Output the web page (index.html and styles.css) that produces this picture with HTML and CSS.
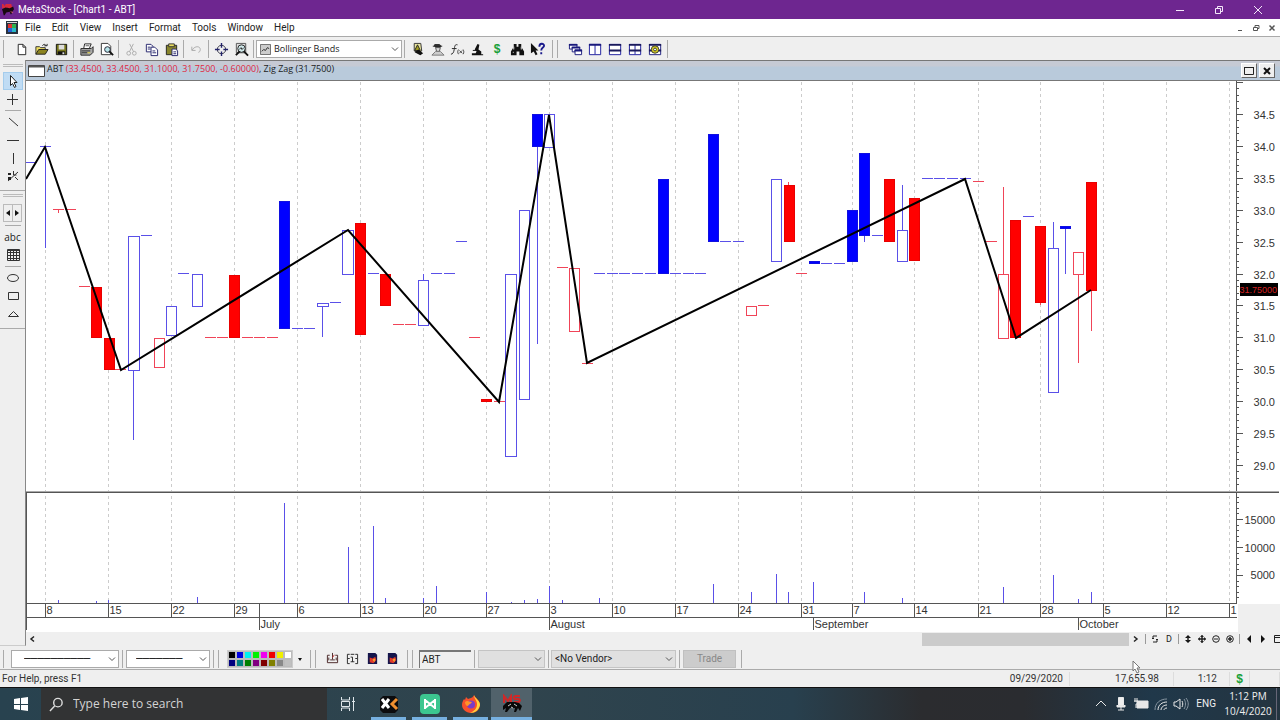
FILE: index.html
```html
<!DOCTYPE html>
<html lang="en">
<head>
<meta charset="utf-8">
<title>MetaStock - [Chart1 - ABT]</title>
<link rel="stylesheet" href="styles.css">
</head>
<body>
<div class="app">
  <header class="titlebar">
    <svg class="bull" viewBox="0 0 16 14"><path d="M2 5V1l2 3 2-3v4M12 1H8v2h4v2H8" fill="none" stroke="#d8283c" stroke-width="2"/><path d="M1 6l4-2 5 1 4-2 1 3-2 3-1 3h-1l-1-3-4 1-2 3H3l-1-4z" fill="#17090f"/><path d="M11 9l3 1" stroke="#d66"/></svg>
    <h1>MetaStock - [Chart1 - ABT]</h1>
    <div class="winbtns">
      <button aria-label="Minimize"><svg viewBox="0 0 10 10"><path d="M1 5.5h8"/></svg></button>
      <button aria-label="Restore"><svg viewBox="0 0 10 10"><path d="M1.500 3.500h5v5h-5zM3.500 3V1.500h5v5H7"/></svg></button>
      <button aria-label="Close"><svg viewBox="0 0 10 10"><path d="M1 1l8 8M9 1L1 9"/></svg></button>
    </div>
  </header>

  <nav class="menubar">
    <svg class="mdi" viewBox="0 0 12 13"><path fill="#2a3340" d="M0 0h12v13H0z"/><path fill="#d8d8d8" d="M1 1h10v1H1z"/><path fill="#e03030" d="M2 3h4v4H2z"/><path fill="#30b050" d="M6 3h4v4H6z"/><path fill="#2860d0" d="M2 7h4v4H2z"/><path fill="#28b8c8" d="M6 7h4v4H6z"/></svg>
    <button>File</button><button>Edit</button><button>View</button><button>Insert</button><button>Format</button><button>Tools</button><button>Window</button><button>Help</button>
    <div class="mdibtns">
      <button aria-label="Minimize chart"><svg viewBox="0 0 8 8"><path d="M2 6.500h4"/></svg></button>
      <button aria-label="Restore chart"><svg viewBox="0 0 8 8"><path d="M1.500 3.500h4v3h-4zM3 3V1.500h4v3H6"/></svg></button>
      <button aria-label="Close chart"><svg viewBox="0 0 8 8"><path d="M1.500 1.500l5 5M6.500 1.500l-5 5" stroke-width="1.500"/></svg></button>
    </div>
  </nav>

  <div class="toolbar">
    <button aria-label="New"><svg viewBox="0 0 16 16"><path d="M4.500 2.500h5l3 3v8h-8z" fill="#fff" stroke="#222"/><path d="M9.500 2.500v3h3" fill="none" stroke="#222"/></svg></button>
    <button aria-label="Open"><svg viewBox="0 0 16 16"><path d="M2 13V5h4l1 1h5v2" fill="#f0e060" stroke="#333"/><path d="M2 13l3-5h10l-3 5z" fill="#8c8420" stroke="#222"/><path d="M9 4c1-2 3-2 4 0m1-2v2h-3" fill="none" stroke="#222"/></svg></button>
    <button aria-label="Save"><svg viewBox="0 0 16 16"><path d="M2.500 2.500h11v11h-11z" fill="#77761c" stroke="#111"/><path d="M5 3h6v5H5z" fill="#ddd"/><path d="M4 10h8v3H4z" fill="#111"/><path d="M9 11h2v2H9z" fill="#ddd"/></svg></button>
    <i class="sep"></i>
    <button aria-label="Print"><svg viewBox="0 0 16 16"><path d="M5 7l1-5h7l-2 5z" fill="#fff" stroke="#222"/><path d="M2 7h11l2-2v6l-3 3H2z" fill="#aaa" stroke="#222"/><path d="M3 9.500h9M3 11.500h6" stroke="#222"/><path d="M9 11h3v1H9z" fill="#dc3"/><path d="M7 4h4" stroke="#555"/></svg></button>
    <button aria-label="Print preview"><svg viewBox="0 0 16 16"><path d="M2.500 1.500h7l3 3v9h-10z" fill="#fff" stroke="#333"/><circle cx="9" cy="8" r="3" fill="#b8e4e8" stroke="#223"/><path d="M11 10l4 4" stroke="#111" stroke-width="2"/></svg></button>
    <i class="sep"></i>
    <button aria-label="Cut"><svg viewBox="0 0 16 16"><g fill="none" stroke="#aaa"><path d="M6 2l4 8M10 2l-4 8"/><circle cx="5" cy="12" r="2"/><circle cx="11" cy="12" r="2"/></g></svg></button>
    <button aria-label="Copy"><svg viewBox="0 0 16 16"><g fill="#fff" stroke="#24246c"><path d="M2.500 2.500h5l2 2v6h-7z"/><path d="M7.500 5.500h4l3 3v6h-7z"/><path d="M4 5.500h3M4 7.500h3M9 9.500h3M9 11.500h4"/></g></svg></button>
    <button aria-label="Paste"><svg viewBox="0 0 16 16"><path d="M2.500 3.500h11v10h-11z" fill="#88852c" stroke="#222"/><path d="M5 2h6v3H5z" fill="#e8dc60" stroke="#333"/><path d="M8.500 7.500h4l2 2v5h-6z" fill="#fff" stroke="#24246c"/><path d="M10 10.500h3M10 12.500h3" stroke="#24246c"/></svg></button>
    <i class="sep"></i>
    <button aria-label="Undo"><svg viewBox="0 0 16 16"><path d="M3 5v4h4M3.500 8.500C6 4 12 4 12 8c0 2-1 3-2 3" fill="none" stroke="#aaa"/></svg></button>
    <i class="sep"></i>
    <button aria-label="Crosshair"><svg viewBox="0 0 16 16"><circle cx="8" cy="8" r="4.500" fill="none" stroke="#334"/><path d="M8 1v5M8 10v5M1 8h5M10 8h5" stroke="#22226c" stroke-width="1.500"/></svg></button>
    <button aria-label="Zoom box"><svg viewBox="0 0 16 16"><path d="M2.500 1.500h10v10h-10z" fill="#ddd" stroke="#555"/><circle cx="8" cy="7" r="4" fill="#cfe8ea" stroke="#222"/><path d="M5.500 8l2-2 1 2 2-2" stroke="#222" fill="none"/><path d="M10.500 10l4.500 4.500M6 10l-4 4" stroke="#111" stroke-width="2"/></svg></button>
    <i class="sep"></i>
    <div class="combo combo-ind">
      <svg class="lead" viewBox="0 0 12 12"><path d="M.5.5h11v11H.5z" fill="#ccc" stroke="#666"/><path d="M2 8l2-2 2 1 2-3 2 1" fill="none" stroke="#222"/></svg>
      <select aria-label="Indicator"><option>Bollinger Bands</option></select>
      <svg class="chev" viewBox="0 0 8 8"><path d="M1 2.500l3 3 3-3"/></svg>
    </div>
    <i class="sep"></i>
    <button aria-label="Expert advisor"><svg viewBox="0 0 16 16"><path d="M4.500 1.500h7l1 8-4 2-4-2z" fill="#e8e4a0" stroke="#333"/><path d="M8 3l3 6H5z" fill="#a4a020" stroke="#222"/><path d="M5 11l4-3 5 4-3 2z" fill="#111"/></svg></button>
    <button aria-label="System tester"><svg viewBox="0 0 16 16"><path d="M4 4l1-2h5l2 2-1 2H6z" fill="#333"/><path d="M3 4.500h10" stroke="#222"/><path d="M6 6h5l-1 4H7z" fill="#ddd" stroke="#555"/><path d="M2 14l4-4h5l4 4z" fill="#ccc" stroke="#777"/></svg></button>
    <button aria-label="Indicator builder"><svg viewBox="0 0 16 16"><path d="M8 3c-3-1-3 2-3.500 5S3 13 1 13M2 7h5" fill="none" stroke="#222"/><path d="M9 8c-1 2-1 3 0 5M14 8c1 2 1 3 0 5M10 9l3 3M13 9l-3 3" fill="none" stroke="#444"/></svg></button>
    <button aria-label="Explorer"><svg viewBox="0 0 16 16"><path d="M8 2l2 1-1 5 3 2v3h2v1H2v-2h4l1-2-2-2z" fill="#111"/><path d="M3 9h5" stroke="#111"/></svg></button>
    <button aria-label="OptionScope" class="dollar">$</button>
    <button aria-label="Find"><svg viewBox="0 0 16 16"><path d="M4 2h3v3h2V2h3v3l3 5v4h-5v-4H7v4H1v-4l3-5z" fill="#111"/><path d="M4 5v3M12 5v3M3 11h1" stroke="#eee"/></svg></button>
    <button aria-label="Context help"><svg viewBox="0 0 16 16"><path d="M1 1v11l3-2 2 4 2-1-2-4h3z" fill="#111"/><path d="M10 5c0-4 5-4 5-1 0 2-3 2-3 5M12 11v2" fill="none" stroke="#1a1a8c" stroke-width="2"/></svg></button>
    <i class="sep sep-wide"></i>
    <button aria-label="Cascade"><svg viewBox="0 0 16 16"><g fill="#fff" stroke="#1a1a7c"><path d="M1.500 2.500h8v5h-8z"/><path d="M4.500 5.500h8v5h-8z"/><path d="M7.500 8.500h7v5h-7z"/></g><path d="M1 3h9M4 6h9M7 9h8" stroke="#1a1a7c" stroke-width="2"/></svg></button>
    <button aria-label="Tile columns"><svg viewBox="0 0 16 16"><path d="M1.500 2.500h12v11h-12zM7.500 3v10" fill="#fff" stroke="#1a1a9c"/><path d="M1 3h13" stroke="#1a1a7c" stroke-width="2"/></svg></button>
    <button aria-label="Tile rows"><svg viewBox="0 0 16 16"><path d="M1.500 2.500h12v11h-12z" fill="#fff" stroke="#1a1a9c"/><path d="M1 3h13M1 9h13" stroke="#1a1a5c" stroke-width="2"/></svg></button>
    <button aria-label="Tile"><svg viewBox="0 0 16 16"><path d="M1.500 2.500h12v11h-12zM7.500 3v10" fill="#fff" stroke="#1a1a9c"/><path d="M1 3h13M1 9h13" stroke="#1a1a5c" stroke-width="2"/></svg></button>
    <button aria-label="Layout"><svg viewBox="0 0 16 16"><path d="M1.500 2.500h12v11h-12z" fill="#fff" stroke="#1a1a7c"/><path d="M1 3h13M1 9h13" stroke="#1a1a5c" stroke-width="2"/><circle cx="7.500" cy="8" r="4" fill="#d8d020" stroke="#333"/><circle cx="7.500" cy="8" r="1.500" fill="#fff" stroke="#333"/></svg></button>
    <i class="sep"></i>
  </div>

  <div class="work">
    <aside class="tools">
      <i class="grip"></i>
      <button class="on" aria-label="Select"><svg viewBox="0 0 16 16"><path d="M5.500 2.500v10l2-2 2 4 1.500-1-2-4h3z" fill="#fff" stroke="#222"/></svg></button>
      <button aria-label="Crosshair tool"><svg viewBox="0 0 16 16"><path d="M7.500 3v11M2 8.500h11"/></svg></button>
      <i class="rule"></i>
      <button aria-label="Trendline"><svg viewBox="0 0 16 16"><path d="M4 4l9 8"/></svg></button>
      <button aria-label="Horizontal line"><svg viewBox="0 0 16 16"><path d="M2 8.500h12"/></svg></button>
      <button aria-label="Vertical line"><svg viewBox="0 0 16 16"><path d="M8.500 3v11"/></svg></button>
      <button aria-label="Studies"><svg viewBox="0 0 16 16"><path d="M3 13l10-9M8.500 3v4h3M10 9l3 3"/><path d="M3 5h3v2H3zM3 9h3v3H3z" fill="#222" stroke="none"/></svg></button>
      <i class="rule rule-full"></i>
      <i class="grip"></i>
      <div class="pair"><button aria-label="Scroll left"><svg viewBox="0 0 8 16"><path d="M6 5v6L2 8z" fill="#111" stroke="none"/></svg></button><button aria-label="Scroll right"><svg viewBox="0 0 8 16"><path d="M2 5v6l4-3z" fill="#111" stroke="none"/></svg></button></div>
      <i class="rule"></i>
      <button class="abc">abc</button>
      <button aria-label="Grid"><svg viewBox="0 0 16 16"><path d="M2.500 2.500h12v11h-12zM2 5.500h12M2 8.500h12M2 11.500h12M5.500 3v11M8.500 3v11M11.500 3v11M2 3.500h13"/></svg></button>
      <i class="rule"></i>
      <button aria-label="Ellipse"><svg viewBox="0 0 16 16"><ellipse cx="8" cy="8" rx="5.500" ry="3.500"/></svg></button>
      <button aria-label="Rectangle"><svg viewBox="0 0 16 16"><path d="M3.500 4.500h10v7h-10z"/></svg></button>
      <button aria-label="Triangle"><svg viewBox="0 0 16 16"><path d="M8.500 5.500l5 5h-10z"/></svg></button>
      <i class="rule rule-full"></i>
    </aside>
    <main class="doc">
      <div class="dochead">
        <svg class="winicon" viewBox="0 0 17 12"><path d="M.5.500h16v11H.5z" fill="#fff" stroke="#444"/><path d="M1 1.500h15" stroke="#555" stroke-width="2"/></svg>
        <p>ABT <span class="neg">(33.4500, 33.4500, 31.1000, 31.7500, -0.60000)</span>, Zig Zag (31.7500)</p>
        <button aria-label="Maximize pane"><svg viewBox="0 0 12 12"><path d="M1.500 2.500h9v7h-9zM1 2.500h10" fill="none" stroke="#222"/></svg></button>
        <button aria-label="Close pane"><svg viewBox="0 0 12 12"><path d="M3 3l6 6M9 3L3 9" stroke="#111" stroke-width="2"/></svg></button>
      </div>
      <svg class="chart" id="chart" viewBox="26 81 1254 551" role="img" aria-label="ABT price and volume"></svg>
      <div class="scroll">
        <button aria-label="Scroll chart left"><svg viewBox="0 0 8 8"><path d="M5 1.500L2 4l3 2.500"/></svg></button>
        <div class="track"><div class="thumb"></div></div>
        <button aria-label="Scroll chart right"><svg viewBox="0 0 8 8"><path d="M2 1.500L5 4 2 6.500"/></svg></button>
        <i></i>
        <button aria-label="Refresh"><svg viewBox="0 0 8 8"><path d="M2 4V1h4M1 3l1 1 1-1M6 4v3H2M5 5l1-1 1 1" stroke-width="1"/></svg></button>
        <button class="per">D</button>
        <i></i>
        <button aria-label="Rescale"><svg viewBox="0 0 8 8"><path d="M4 0l3 3H1zM4 8l3-3H1z" fill="#111" stroke="none"/><path d="M4 2v4"/></svg></button>
        <button aria-label="Pan"><svg viewBox="0 0 8 8"><path d="M4 0v8M0 4h8" /><path d="M2.500 1.500h3M2.500 6.500h3M1.500 2.500v3M6.500 2.500v3" stroke-width="1"/></svg></button>
        <button aria-label="Zoom out"><svg viewBox="0 0 8 8"><circle cx="4" cy="4" r="3.300" stroke-width="1"/><path d="M2 4h4" stroke-width="1"/></svg></button>
        <button aria-label="Zoom in"><svg viewBox="0 0 8 8"><circle cx="4" cy="4" r="3.300" stroke-width="1"/><path d="M2 4h4M4 2v4"/></svg></button>
        <i></i>
        <button aria-label="Previous"><svg viewBox="0 0 8 8"><path d="M6 0v8L2 4z" fill="#111" stroke="none"/></svg></button>
        <button aria-label="Next"><svg viewBox="0 0 8 8"><path d="M2 0v8l4-4z" fill="#111" stroke="none"/></svg></button>
        <button class="cut" aria-label="Data window"><svg viewBox="0 0 8 8"><path d="M8 .5H1.500v7H8M1 2.500h7" stroke-width="1"/></svg></button>
      </div>
    </main>
  </div>

  <div class="linebar">
    <i class="bar"></i>
    <div class="combo w-style"><select aria-label="Line style"><option>──────────</option></select><svg class="chev" viewBox="0 0 8 8"><path d="M1 2.500l3 3 3-3"/></svg></div>
    <i class="bar"></i>
    <div class="combo w-weight"><select aria-label="Line weight"><option>───────</option></select><svg class="chev" viewBox="0 0 8 8"><path d="M1 2.500l3 3 3-3"/></svg></div>
    <i class="bar"></i><i class="bar"></i>
    <div class="palette" id="palette"></div>
    <button class="more" aria-label="More colors"><svg viewBox="0 0 8 8"><path d="M2 3h4L4 6z" fill="#111"/></svg></button>
    <i class="bar"></i><i class="bar"></i>
    <button class="ico" aria-label="Download data"><svg viewBox="0 0 14 14"><path d="M4 3.500H1.500v8h11v-8H10M7 1v7M4.500 8.500h5M3 9V6M11 9V6" fill="none" stroke="#422"/><path d="M9 3l-2 3" stroke="#c33"/></svg></button>
    <button class="ico" aria-label="Edit data"><svg viewBox="0 0 14 14"><path d="M4 2.500H1.500v10H4M10 2.500h2.500v10H10M5 5.500h2v5M5 10.500h4M2 7h2M10 7h2M5 2.500h4" fill="none" stroke="#222"/></svg></button>
    <button class="ico" aria-label="Sell order"><svg viewBox="0 0 14 14"><path d="M2 1h8l2 2v10H2z" fill="#16164c"/><path d="M4 6l3 1 3-2 1 4-3 3-4-1z" fill="#e03828"/><path d="M7 8l3-1-1 4z" fill="#f0b030"/></svg></button>
    <button class="ico" aria-label="Buy order"><svg viewBox="0 0 14 14"><path d="M2 1h8l2 2v10H2z" fill="#16164c"/><path d="M4 6l3 1 3-2 1 4-3 3-4-1z" fill="#e03828"/><path d="M7 8l3-1-1 4z" fill="#f0b030"/></svg></button>
    <i class="bar"></i><i class="bar"></i>
    <input class="symbol" aria-label="Symbol" value="ABT">
    <i class="bar"></i>
    <div class="combo off w-acct"><select aria-label="Period"><option></option></select><svg class="chev" viewBox="0 0 8 8"><path d="M1 2.500l3 3 3-3"/></svg></div>
    <i class="bar"></i>
    <div class="combo off w-vendor"><select aria-label="Vendor"><option>&lt;No Vendor&gt;</option></select><svg class="chev" viewBox="0 0 8 8"><path d="M1 2.500l3 3 3-3"/></svg></div>
    <i class="bar"></i>
    <button class="trade" disabled>Trade</button>
    <i class="bar"></i>
  </div>

  <footer class="status">
    <p>For Help, press F1</p>
    <span class="s-date">09/29/2020</span><span class="s-val">17,655.98</span><span class="s-time">1:12</span><span class="dollar">$</span><span class="s-end"></span>
  </footer>

  <div class="taskbar">
    <button class="start" aria-label="Start"><svg viewBox="0 0 14 14"><path d="M0 2l6-1v6H0zM7 1l7-1v7H7zM0 8h6v5l-6-1zM7 8h7v6l-7-1z" fill="#fff"/></svg></button>
    <label class="search"><svg viewBox="0 0 16 16"><circle cx="9.500" cy="6" r="4.500"/><path d="M6 9.500L1 15"/></svg><input placeholder="Type here to search"></label>
    <button class="app-ico" aria-label="Task view"><svg viewBox="0 0 16 16"><path d="M1.500 1v3h8V1M1.500 5.500h8v5h-8zM1.500 15v-3h8v3M13.500 1v14M12 5.500h3" fill="none" stroke="#dfe6ea"/></svg></button>
    <button class="app-ico run" aria-label="XM"><svg viewBox="0 0 20 20"><path d="M4 2h12l3 3v11l-3 3H4l-3-3V5z" fill="#0c0c0e"/><path d="M3 5l7 9M10 5l-7 9" stroke="#fff" stroke-width="3"/><path d="M18 5l-5 5 5 5" fill="none" stroke="#f09030" stroke-width="3"/></svg></button>
    <button class="app-ico run" aria-label="Filmora"><svg viewBox="0 0 20 20"><rect width="20" height="20" rx="4" fill="#3cc690"/><path d="M5 5v10M15 5v10M5 6l5 4-5 4M15 6l-5 4 5 4" fill="none" stroke="#fff" stroke-width="2"/></svg></button>
    <button class="app-ico run" aria-label="Firefox"><svg viewBox="0 0 20 20"><path d="M3 5l1 1 1-3 2 2c4-1 5-2 6-4 1 3 5 4 6 9 0 6-4 9-9 9S1 15 1 11c0-3 1-4 2-6z" fill="#f8502c"/><path d="M13 1c1 4 6 5 6 10-1 5-5 8-10 8 4-2 7-4 7-9 0-4-3-5-3-9z" fill="#ffd43c"/><circle cx="10" cy="10.500" r="4" fill="#7a3cc8"/><path d="M4 8c3-2 4 0 7 0-1 2-3 2-4 4-2 0-3-2-3-4z" fill="#ff9428"/></svg></button>
    <button class="app-ico run active" aria-label="MetaStock"><svg viewBox="0 0 20 20"><path d="M2 9V2l4 5 3-5v6M18 2h-4c-3 0-3 3 0 3h2c3 0 2 3 0 3h-4" fill="none" stroke="#d02828" stroke-width="2"/><path d="M1 12l4-4 8 0 4 1 3 3-2 5-2-3-2 4h-2l1-4H8l-3 4H3l1-4-3 2z" fill="#080808"/><path d="M6 12l3-2M12 10l3 2M9 13l2 1" stroke="#ccc"/></svg></button>
    <div class="tray">
      <svg viewBox="0 0 16 16"><path d="M3 10l5-5 5 5"/></svg>
      <svg viewBox="0 0 16 16"><path d="M5.500 1.500h5v8h-5zM4 9v2h8V9M8 11v3M5 14h6" fill="#eee"/></svg>
      <svg viewBox="0 0 16 16"><path d="M4 5h11v7H4z" fill="#e8e8e8"/><path d="M2 2v4M4 2v4M1 5h4v3H3v4"/></svg>
      <svg viewBox="0 0 16 16"><path d="M2 14C2 7 7 3 14 3" stroke="#8694a0"/><path d="M5 14c0-5 4-8 9-8M8 14c0-3 3-5 6-5M11 14c0-1 1-2 3-2"/></svg>
      <svg viewBox="0 0 16 16"><path d="M1 6h2l4-3v10l-4-3H1zM9 5c1 2 1 4 0 6"/><path d="M11 3c2 3 2 7 0 10M13 2c3 4 3 8 0 12" stroke="#8694a0"/></svg>
    </div>
    <span class="lang">ENG</span>
    <time class="clock">1:12 PM<br>10/4/2020</time>
    <i class="peek"></i>
  </div>
  <svg class="pointer" viewBox="0 0 9 14"><path d="M1 1v10l2-2 2 4 2-1-2-4h3z" fill="#fff" stroke="#777"/></svg>
</div>
<script src="chart.js"></script>
</body>
</html>
```

FILE: styles.css
```css
* { box-sizing: border-box; }
body { margin: 0; background: #efefef; color: #222; font: 10px/14px Roboto, "Open Sans", sans-serif; }
h1, p { margin: 0; font: inherit; }
button, input, select { margin: 0; padding: 0; border: 0; background: none; color: inherit; font: inherit; border-radius: 0; }
svg { display: block; }
i { display: block; flex: none; }
.app { position: relative; display: flex; flex-direction: column; min-height: 100vh; }

.titlebar { display: flex; align-items: center; height: 19px; padding: 0 3px 0 1px; background: #6e2690; color: #fff; }
.titlebar h1 { flex: 1; }
.bull { width: 14px; height: 12px; margin-right: 3px; }
.winbtns { display: flex; }
.winbtns button { display: grid; place-items: center; width: 39px; height: 19px; }
.winbtns svg { width: 10px; height: 10px; fill: none; stroke: #f4e8fa; }

.menubar { display: flex; align-items: center; height: 18px; padding-left: 6px; background: #fff; border-bottom: 1px solid #aaa; }
.menubar > button { padding: 0 6px 0 5px; }
.mdi { width: 12px; height: 13px; margin-right: 2px; }
.mdibtns { display: flex; margin-left: auto; }
.mdibtns button { display: grid; place-items: center; width: 16px; height: 16px; }
.mdibtns svg { width: 8px; height: 8px; fill: none; stroke: #555; }

.toolbar { display: flex; align-items: center; height: 23px; padding: 1px 0 0 3px; }
.toolbar::before { content: ""; width: 7px; height: 18px; border-left: 1px solid #aaa; }
.toolbar > button { display: grid; place-items: center; width: 20px; height: 20px; }
.toolbar > button svg { width: 15px; height: 15px; }
.sep { width: 5px; height: 18px; background: linear-gradient(#aaa, #aaa) center / 1px 100% no-repeat; }
.sep-wide { width: 13px; margin-left: 5px; border-left: 1px solid #aaa; background-position: 4px 0; }
.dollar { color: #18a038; font: bold 12px/16px "Liberation Sans", sans-serif; }

.combo { display: flex; align-items: center; height: 18px; background: #fff; border: 1px solid #aaa; }
.combo select { flex: 1; min-width: 0; height: 100%; appearance: none; padding-left: 3px; }
.combo .chev { flex: none; width: 8px; height: 8px; margin-right: 2px; fill: none; stroke: #555; pointer-events: none; }
.combo-ind { width: 146px; }
.combo-ind select { font: 9px/14px "Open Sans", sans-serif; }
.lead { width: 11px; height: 11px; margin-left: 3px; }
.w-style { width: 108px; }
.w-weight { width: 84px; }
.w-style select, .w-weight select { padding-left: 12px; font: 11px/14px "DejaVu Sans Mono", monospace; }
.w-weight select { padding-left: 9px; }
.w-acct { width: 67px; }
.w-vendor { width: 125px; }
.off { background: #e0e0e0; border-color: #c4c4c4; }

.work { display: grid; grid-template-columns: 26px minmax(0, 1fr); }
.tools { display: flex; flex-direction: column; align-items: center; border-right: 1px solid #888; border-bottom: 1px solid #ccc; padding-top: 4px; }
.tools > button { display: grid; place-items: center; flex: none; width: 20px; height: 18px; }
.tools svg { width: 16px; height: 16px; fill: none; stroke: #333; }
.tools .on { background: #c0dcf4; border: 1px solid #a4ccec; }
.grip { width: 20px; height: 3px; margin-bottom: 5px; border-top: 1px solid #bbb; border-bottom: 1px solid #bbb; }
.rule { width: 16px; height: 1px; margin: 2px 0; background: #aaa; }
.rule-full { width: 100%; margin: 5px 0 3px; }
.pair { display: flex; width: 19px; height: 18px; margin: 2px 0 1px; border: 1px solid #bbb; flex: none; }
.pair button { flex: 1; display: grid; place-items: center; }
.pair button + button { border-left: 1px solid #bbb; }
.pair svg { width: 8px; height: 16px; }
.tools .abc { font: 10px/18px "Open Sans", sans-serif; }

.dochead { display: flex; align-items: center; gap: 2px; height: 21px; padding: 0 5px 0 2px; border-top: 1px solid #777; border-bottom: 1px solid #777; background: linear-gradient(#c6cad4 5px, #b9cadb 6px); }
.dochead p { flex: 1; padding-bottom: 3px; font: 9px/14px "Open Sans", sans-serif; white-space: nowrap; }
.dochead .neg { color: #e02840; }
.winicon { width: 17px; height: 12px; }
.dochead button { display: grid; place-items: center; width: 16px; height: 15px; background: #efefef; border: 1px solid #fff; border-right-color: #666; border-bottom-color: #666; }
.dochead button svg { width: 12px; height: 12px; }

.chart { width: 100%; height: auto; background: #fff; font: 11px "Liberation Sans", sans-serif; shape-rendering: crispEdges; }
.chart .grid { stroke: #ccc; stroke-dasharray: 3 3; }
.chart .axis { stroke: #555; fill: none; }
.chart .split { stroke: #aaa; }
.chart text { fill: #333; }
.chart .up { stroke: #5a50e8; fill: #fff; }
.chart .upfill { stroke: #1010e0; fill: #0000ff; }
.chart .dn { stroke: #f04458; fill: #fff; }
.chart .dnfill { stroke: #e80000; fill: #ff0000; }
.chart .vol { stroke: #5a50e8; }
.chart .zig { fill: none; stroke: #000; stroke-width: 2; shape-rendering: auto; }
.chart .tag { fill: #000; }
.chart .end { text-anchor: end; }
.chart text.last { fill: #d82020; font-size: 9px; }

.scroll { display: flex; align-items: center; height: 14px; overflow: hidden; }
.scroll > button { display: grid; place-items: center; flex: none; width: 14px; height: 14px; }
.scroll svg { width: 8px; height: 8px; fill: none; stroke: #222; stroke-width: 1.5; }
.scroll > i { width: 1px; height: 10px; margin: 0 2px; background: #999; }
.scroll .per { font-size: 9px; }
.scroll > .cut { width: 10px; padding-left: 3px; }
.track { flex: 1; display: flex; justify-content: flex-end; }
.thumb { width: 19%; height: 13px; background: #cbcbcb; }

.linebar { display: flex; align-items: center; height: 24px; padding: 2px 0 0 3px; gap: 3px; border-bottom: 1px solid #aaa; }
.bar { width: 1px; height: 18px; background: #aaa; }
.w-style { margin-left: 4px; }
.linebar .bar + .bar { margin-left: 1px; }
.palette { display: grid; grid-template-columns: repeat(8, 8px); grid-auto-rows: 8px; margin-left: 5px; border: 1px solid #ccc; }
.palette button { border: 1px solid #bbb; }
.more, .more svg { width: 8px; height: 8px; }
.more + .bar { margin-left: 3px; }
.ico { display: grid; place-items: center; width: 17px; height: 18px; }
.ico svg { width: 13px; height: 13px; }
.bar + .ico { margin-left: 5px; }
.ico + .bar { margin-left: 3px; }
.symbol { width: 52px; height: 18px; margin-left: 3px; padding: 0 2px; border-top: 2px solid #777; border-left: 1px solid #777; }
.w-vendor { margin-left: -1px; }
.trade { width: 53px; height: 18px; margin-right: 2px; background: #ccc; border: 1px solid #c0c0c0; color: #888; }

.status { display: flex; align-items: center; height: 17px; padding: 1px 0 0 2px; color: #333; }
.status p { flex: 1; }
.status span { padding: 0 8px; text-align: right; border-right: 1px solid #ddd; }
.status .s-date { width: 84px; padding-right: 6px; }
.status .s-val { width: 104px; padding-right: 14px; }
.status .s-time { width: 56px; padding-right: 12px; }
.status .dollar { width: 20px; padding: 0 6px 0 4px; }
.status .s-end { width: 30px; height: 14px; }

.taskbar { display: flex; align-items: stretch; height: 33px; flex: 1; border-top: 1px solid #111; color: #f0f0f0; background: linear-gradient(90deg, #28424f 0, #30444d 40%, #28404e 62%, #2b2c2f 72%, #2a2c30 80%, #20384a 90%, #243440); }
.start { display: grid; place-items: center; width: 41px; }
.start svg { width: 14px; height: 14px; }
.search { display: flex; align-items: center; width: 286px; padding-left: 8px; gap: 9px; background: #323334; }
.search svg { width: 15px; height: 15px; fill: none; stroke: #ddd; stroke-width: 1.5; }
.search input { flex: 1; min-width: 0; color: #ddd; font: 12px/16px "Open Sans", sans-serif; }
.search input::placeholder { color: #d4d4d4; opacity: 1; }
.app-ico { display: grid; place-items: center; width: 41px; }
.app-ico svg { width: 20px; height: 20px; }
.search + .app-ico svg { width: 16px; height: 16px; }
.run { background: linear-gradient(#76b0e0, #76b0e0) bottom center / 35px 3px no-repeat; }
.active { background: linear-gradient(#76b0e0, #76b0e0) bottom / 100% 3px no-repeat, #51626b; }
.tray { display: flex; align-items: center; gap: 4px; margin-left: auto; }
.tray svg { width: 16px; height: 16px; fill: none; stroke: #e8e8e8; }
.lang { align-self: center; padding: 0 7px; font-size: 10px; }
.clock { align-self: center; width: 50px; font: 10px/15px "Open Sans", sans-serif; text-align: center; white-space: nowrap; }
.peek { width: 4px; margin-left: 3px; border-left: 1px solid #667; }
.pointer { position: absolute; left: 1132px; top: 660px; width: 9px; height: 14px; }
```

FILE: chart.js
```js
const svg = document.getElementById("chart");
const out = [];
const line = (x1, y1, x2, y2, c) => out.push(`<path class="${c}" d="M${x1} ${y1}L${x2} ${y2}"/>`);
const text = (x, y, s, c = "") => out.push(`<text class="${c}" x="${x}" y="${y}">${s}</text>`);

const weeks = [[45.5, 8], [108.5, 15], [171.5, 22], [234.5, 29], [297.5, 6], [360.5, 13], [423.5, 20],
  [486.5, 27], [549.5, 3], [612.5, 10], [675.5, 17], [738.5, 24], [801.5, 31], [852.5, 7], [914.5, 14],
  [978.5, 21], [1040.5, 28], [1103.5, 5], [1166.5, 12], [1229.5, 1]];
for (const [x, d] of weeks) {
  line(x, 82, x, 603, "grid");
  line(x, 603, x, 617, "axis");
  text(x + 1, 614, d);
}

// kind, left, right, top, bottom
const bodies = `dnfill 91 101 287 337|dnfill 104 114 338 369|up 128 139 236 370|dn 154 164 338 367|up 166 176 306 335
up 192 202 274 306|dnfill 229 239 275 337|upfill 279 289 201 328|up 317 328 303 306|up 342 353 230 274
dnfill 355 365 223 334|dnfill 380 390 274 305|up 418 428 280 325|dnfill 481 491 399 401|up 505 516 274 456
up 519 529 210 399|upfill 532 542 114 146|up 544 554 114 147|dn 569 579 268 331|upfill 658 668 179 273
upfill 708 718 134 241|dn 746 756 306 315|up 771 781 179 261|dnfill 784 794 185 241|upfill 809 819 261 263
upfill 847 857 210 261|upfill 859 869 153 235|dnfill 884 894 179 241|up 897 907 230 261|dnfill 909 919 198 260
dn 998 1008 274 338|dnfill 1010 1020 220 337|dnfill 1035 1045 226 302|up 1048 1058 248 392|upfill 1060 1070 226 228
dn 1073 1083 252 274|dnfill 1086 1096 182 290`;
// kind, x, top, bottom
const wicks = `up 45 147 248|dn 58 210 213|up 133 370 440|up 322 306 337|up 423 274 280|up 537 147 344|dn 788 182 185
up 864 236 242|up 902 185 230|dn 1003 187 274|dn 1040 302 305|up 1053 222 248|up 1065 228 274|dn 1078 274 363|dn 1091 290 331`;
// kind, y, then the left edge of each dash
const dashes = `up 162 26|up 146 40|dn 209 53 65|dn 286 79|dn 369 115|up 235 141|up 273 178|dn 337 205 217 242 254 267
up 328 292 304|up 302 330|up 273 368 431 444|dn 324 393 405|up 241 456|dn 337 469|dn 401 494|dn 267 557|dn 363 582
up 273 594 607 619 632 645 670 683 695|up 241 720 733|dn 305 758|dn 273 796|up 263 821 834|up 235 872
up 178 922 934 947 960|dn 181 973|dn 241 986|up 216 1023`;
const rows = s => s.split(/[|\n]/).map(r => { const [k, ...n] = r.trim().split(" "); return [k, ...n.map(Number)]; });

for (const [k, x, a, b] of rows(wicks)) line(x + 0.5, a, x + 0.5, b, k);
for (const [k, l, r, t, b] of rows(bodies))
  out.push(`<rect class="${k}" x="${l + 0.5}" y="${t + 0.5}" width="${r - l}" height="${b - t}"/>`);
for (const [k, y, ...xs] of rows(dashes)) for (const x of xs) line(x, y + 0.5, x + 11, y + 0.5, k);
out.push('<path class="zig" d="M26 179L45 147L121 370L348 230L499 402L549 115L587 363L965 179L1016 338L1091 290"/>');

const volume = [[197, 597], [284, 503], [348, 547], [373, 526], [385, 598], [423, 598], [436, 586], [486, 592],
  [537, 599], [549, 586], [599, 598], [713, 584], [751, 592], [776, 574], [788, 592], [813, 582], [864, 592],
  [902, 598], [1003, 587], [1053, 575], [1091, 592], [58, 600], [96, 601], [108, 600], [511, 602], [524, 600], [562, 600], [1078, 599]];
for (const [x, y] of volume) line(x + 0.5, y, x + 0.5, 603, "vol");

// axes
line(1236.5, 81, 1236.5, 603, "axis");
line(26, 491.5, 1279, 491.5, "split");
line(26, 492.5, 1279, 492.5, "axis");
line(26, 603.5, 1237, 603.5, "axis");
line(26, 617.5, 1237, 617.5, "axis");
line(26.5, 492, 26.5, 630, "axis");
for (let n = -5; n <= 58; n++) {
  const y = Math.round(115 + n * 6.38) - 0.5;
  line(1237, y, n % 5 === 0 ? 1243 : 1239, y, "axis");
}
for (let n = 0; n <= 11; n++) text(1275, Math.round(119 + n * 31.9), (34.5 - n * 0.5).toFixed(1), "end");
for (let n = -4; n <= 14; n++) {
  const y = Math.round(519 + n * 5.6) + 0.5;
  line(1237, y, n % 5 === 0 ? 1243 : 1239, y, "axis");
}
[[524, 15000], [552, 10000], [579, 5000]].forEach(([y, s]) => text(1275, y, s, "end"));
[[259.5, "July"], [549.5, "August"], [813.5, "September"], [1078.5, "October"]].forEach(([x, s]) => {
  line(x, s === "July" ? 603 : 617, x, 630, "axis");
  text(x + 1, 628, s);
});
out.push('<rect x="1238" y="604" width="42" height="28" fill="#efefef"/>');
out.push('<rect class="tag" x="1240" y="283" width="38" height="13"/>');
text(1277, 293, "31.75000", "end last");
svg.innerHTML = out.join("");

const colors = ["#000", "#0000e0", "#00f0f0", "#00f000", "#f000f0", "#f00000", "#f0f000", "#fff",
  "#000080", "#008080", "#008000", "#800080", "#800000", "#808000", "#888", "#c0c0c0"];
document.getElementById("palette").innerHTML = colors
  .map(c => `<button aria-label="Color ${c}" style="background:${c}"></button>`).join("");
```
